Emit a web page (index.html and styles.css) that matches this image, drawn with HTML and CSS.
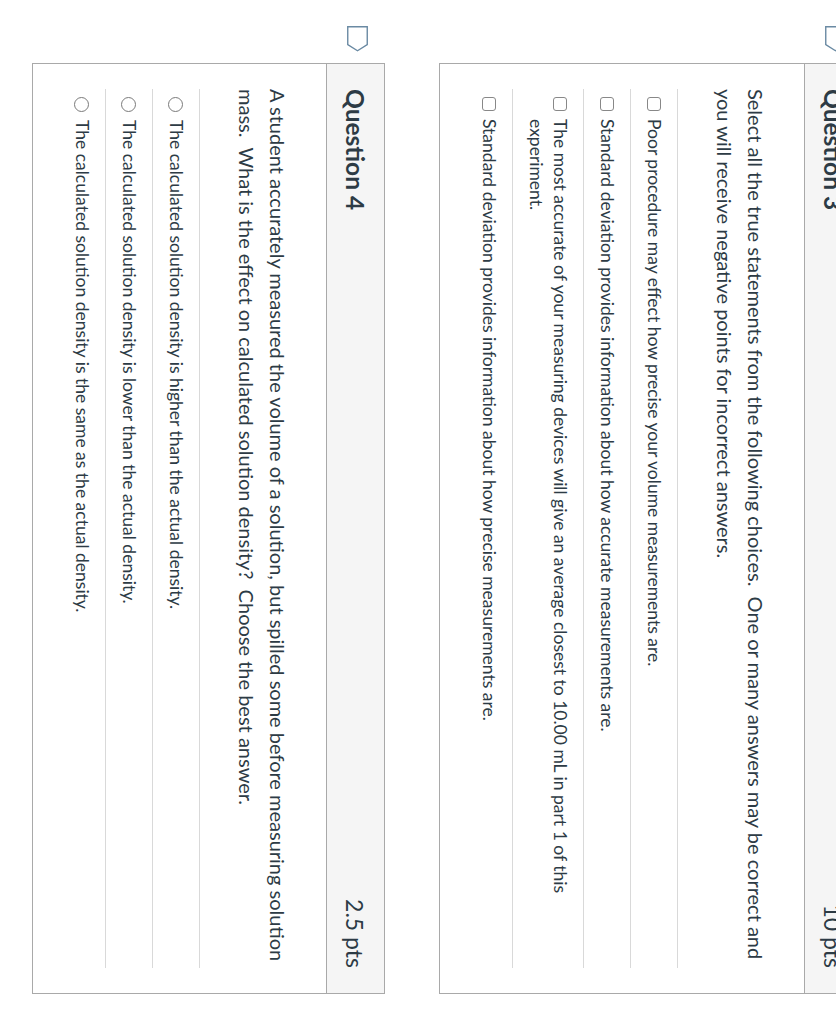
FILE: index.html
```html
<!DOCTYPE html>
<html lang="en">
<head>
<meta charset="utf-8">
<title>Quiz</title>
<link rel="stylesheet" href="styles.css">
</head>
<body>
<div class="viewport">
  <div class="page">
    <div class="quiz">
      <div class="q-row">
        <div class="flag">
          <svg width="26" height="21" viewBox="0 0 26 21"><path d="M0.75 0.75 H18.5 L24.75 10.5 L18.5 20.25 H0.75 Z" fill="#fff" stroke="#6a8aa3" stroke-width="1.4" stroke-linejoin="miter"/></svg>
        </div>
        <div class="card">
          <div class="card-head"><span class="q-name">Question 3</span><span class="q-pts">10 pts</span></div>
          <div class="card-body">
            <div class="q-text">Select all the true statements from the following choices.&nbsp; One or many answers may be correct and you will receive negative points for incorrect answers.</div>
            <div class="answers">
              <div class="answer"><span class="box"></span><span class="a-text">Poor procedure may effect how precise your volume measurements are.</span></div>
              <div class="answer"><span class="box"></span><span class="a-text">Standard deviation provides information about how accurate measurements are.</span></div>
              <div class="answer"><span class="box"></span><span class="a-text">The most accurate of your measuring devices will give an average closest to 10.00 mL in part 1 of this experiment.</span></div>
              <div class="answer"><span class="box"></span><span class="a-text">Standard deviation provides information about how precise measurements are.</span></div>
            </div>
          </div>
        </div>
      </div>
      <div class="q-row">
        <div class="flag">
          <svg width="26" height="21" viewBox="0 0 26 21"><path d="M0.75 0.75 H18.5 L24.75 10.5 L18.5 20.25 H0.75 Z" fill="#fff" stroke="#6a8aa3" stroke-width="1.4" stroke-linejoin="miter"/></svg>
        </div>
        <div class="card">
          <div class="card-head"><span class="q-name">Question 4</span><span class="q-pts">2.5 pts</span></div>
          <div class="card-body">
            <div class="q-text">A student accurately measured the volume of a solution, but spilled some before measuring solution mass.&nbsp; What is the effect on calculated solution density?&nbsp; Choose the best answer.</div>
            <div class="answers">
              <div class="answer"><span class="radio"></span><span class="a-text">The calculated solution density is higher than the actual density.</span></div>
              <div class="answer"><span class="radio"></span><span class="a-text">The calculated solution density is lower than the actual density.</span></div>
              <div class="answer"><span class="radio"></span><span class="a-text">The calculated solution density is the same as the actual density.</span></div>
            </div>
          </div>
        </div>
      </div>
    </div>
  </div>
</div>
</body>
</html>
```
FILE: styles.css
```css
html, body {
  margin: 0;
  padding: 0;
  background: #fff;
}
.viewport {
  width: 836px;
  height: 1012px;
  overflow: hidden;
}
.page {
  width: 1012px;
  height: 836px;
  transform-origin: 0 0;
  transform: translateX(836px) rotate(90deg);
  font-family: Lato, "Open Sans", sans-serif;
  color: #2d3b45;
  overflow: hidden;
}
.quiz {
  margin-top: -27px;
  padding-left: 26px;
  width: 968px;
  display: flex;
  flex-direction: column;
  gap: 54px;
}
.q-row {
  display: flex;
  align-items: flex-start;
  gap: 11px;
}
.flag {
  width: 26px;
  padding-top: 17px;
  flex: none;
  line-height: 0;
}
.card {
  width: 929px;
  border: 1px solid #a9a9a9;
  background: #fff;
}
.card-head {
  height: 57px;
  background: #f5f5f5;
  border-bottom: 1px solid #a9a9a9;
  display: flex;
  align-items: center;
  justify-content: space-between;
  padding: 0 25px;
}
.q-name {
  font-weight: 700;
  font-size: 24.5px;
}
.q-pts {
  font-size: 23px;
}
.card-body {
  padding: 33px 25px 26px;
}
.q-text {
  font-size: 20px;
  line-height: 31px;
}
.answers {
  margin-top: 31px;
}
.answer {
  border-top: 1px solid #d9d9d9;
  display: flex;
  align-items: flex-start;
  gap: 8px;
  padding: 11px 0 11px 8px;
  font-size: 17.5px;
  line-height: 24px;
}
.box {
  flex: none;
  width: 12px;
  height: 12px;
  margin-top: 4.5px;
  border: 1.5px solid #888;
  border-radius: 3px;
}
.radio {
  flex: none;
  width: 13px;
  height: 13px;
  margin-top: 4.5px;
  border: 1px solid #7a7a7a;
  border-radius: 50%;
}
.a-text {
  flex: 1;
}
```
